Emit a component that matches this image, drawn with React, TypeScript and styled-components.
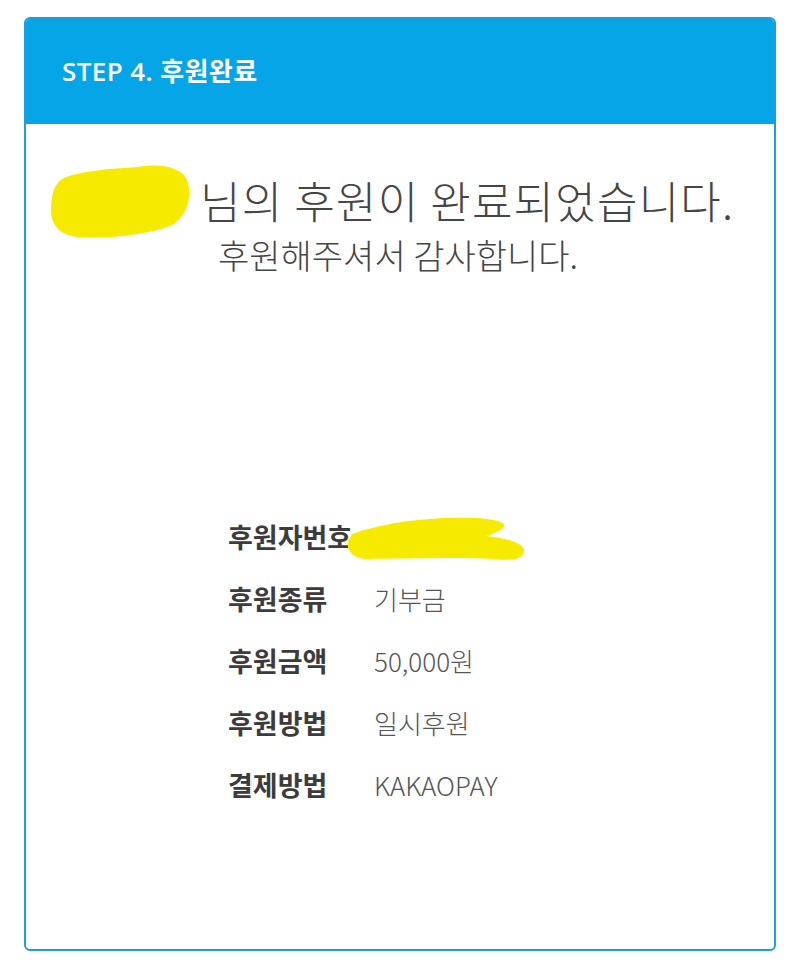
import styled, { createGlobalStyle } from "styled-components";

const GlobalStyle = createGlobalStyle`
  html, body {
    margin: 0;
    padding: 0;
    background: #ffffff;
    font-family: "Noto Sans CJK KR", "Noto Sans", sans-serif;
  }
`;

type Row = { label: string; value?: string; hidden?: boolean };

const rows: Row[] = [
  { label: "후원자번호", hidden: true },
  { label: "후원종류", value: "기부금" },
  { label: "후원금액", value: "50,000원" },
  { label: "후원방법", value: "일시후원" },
  { label: "결제방법", value: "KAKAOPAY" },
];

const Blob = ({ kind }: { kind: "name" | "number" }) =>
  kind === "name" ? (
    <NameMark width="144" height="82" viewBox="0 0 144 82">
      <path
        d="M14 20 C30 12 60 10 90 8 C112 4 136 8 140 24 C144 40 138 58 124 66 C100 76 60 80 30 78 C10 76 2 64 3 48 C4 34 6 26 14 20 Z"
        fill="#f6ea00"
      />
    </NameMark>
  ) : (
    <NumberMark width="184" height="50" viewBox="0 0 184 50">
      <path
        d="M8 20 C30 12 60 6 100 4 C130 3 152 4 160 10 C162 15 152 19 142 22 C160 24 178 28 180 36 C180 45 170 47 150 45 C110 43 60 45 24 45 C8 45 2 36 4 27 Z"
        fill="#f6ea00"
      />
    </NumberMark>
  );

const App = () => {
  return (
    <>
      <GlobalStyle />
      <Page>
        <Card>
          <Header>STEP 4. 후원완료</Header>
          <Body>
            <Message>
              <Title>
                <Blob kind="name" />
                <span>님의 후원이 완료되었습니다.</span>
              </Title>
              <Thanks>후원해주셔서 감사합니다.</Thanks>
            </Message>
            <InfoList>
              {rows.map((r) => (
                <InfoRow key={r.label}>
                  <Label $auto={r.hidden}>{r.label}</Label>
                  {r.hidden ? <Blob kind="number" /> : <Value>{r.value}</Value>}
                </InfoRow>
              ))}
            </InfoList>
          </Body>
        </Card>
      </Page>
    </>
  );
};

const Page = styled.div`
  padding: 17px 24px 22px;
`;

const Card = styled.div`
  height: 934px;
  box-sizing: border-box;
  border: 2px solid #1c9fd6;
  border-radius: 6px;
  overflow: hidden;
  display: flex;
  flex-direction: column;
`;

const Header = styled.div`
  height: 105px;
  background: #06a5e7;
  color: #ffffff;
  font-family: "Open Sans", "Noto Sans CJK KR", sans-serif;
  font-weight: 600;
  font-size: 26px;
  letter-spacing: 0.4px;
  display: flex;
  align-items: center;
  padding-left: 36px;
  padding-bottom: 4px;
  box-sizing: border-box;
`;

const Body = styled.div`
  flex: 1;
  display: flex;
  flex-direction: column;
`;

const Message = styled.div`
  padding: 35px 0 0 22px;
  color: #454545;
`;

const Title = styled.div`
  display: flex;
  align-items: center;
  font-size: 44px;
  font-weight: 300;
  letter-spacing: 1.2px;
  line-height: 1;
  gap: 8px;
`;

const NameMark = styled.svg`
  display: block;
  flex: none;
`;

const NumberMark = styled.svg`
  display: block;
  margin-left: -8px;
  margin-top: 4px;
`;

const Thanks = styled.div`
  margin: -6px 0 0 170px;
  font-size: 34px;
  font-weight: 300;
  line-height: 1.2;
`;

const InfoList = styled.div`
  margin-top: 239px;
  padding-left: 202px;
  display: flex;
  flex-direction: column;
  gap: 18px;
`;

const InfoRow = styled.div`
  display: flex;
  align-items: center;
  height: 44px;
`;

const Label = styled.div<{ $auto?: boolean }>`
  width: ${(p) => (p.$auto ? "auto" : "146px")};
  font-size: 27px;
  font-weight: 700;
  color: #3c3c3c;
  flex: none;
  white-space: nowrap;
`;

const Value = styled.div`
  font-size: 26px;
  font-weight: 300;
  color: #555555;
`;

export default App;
